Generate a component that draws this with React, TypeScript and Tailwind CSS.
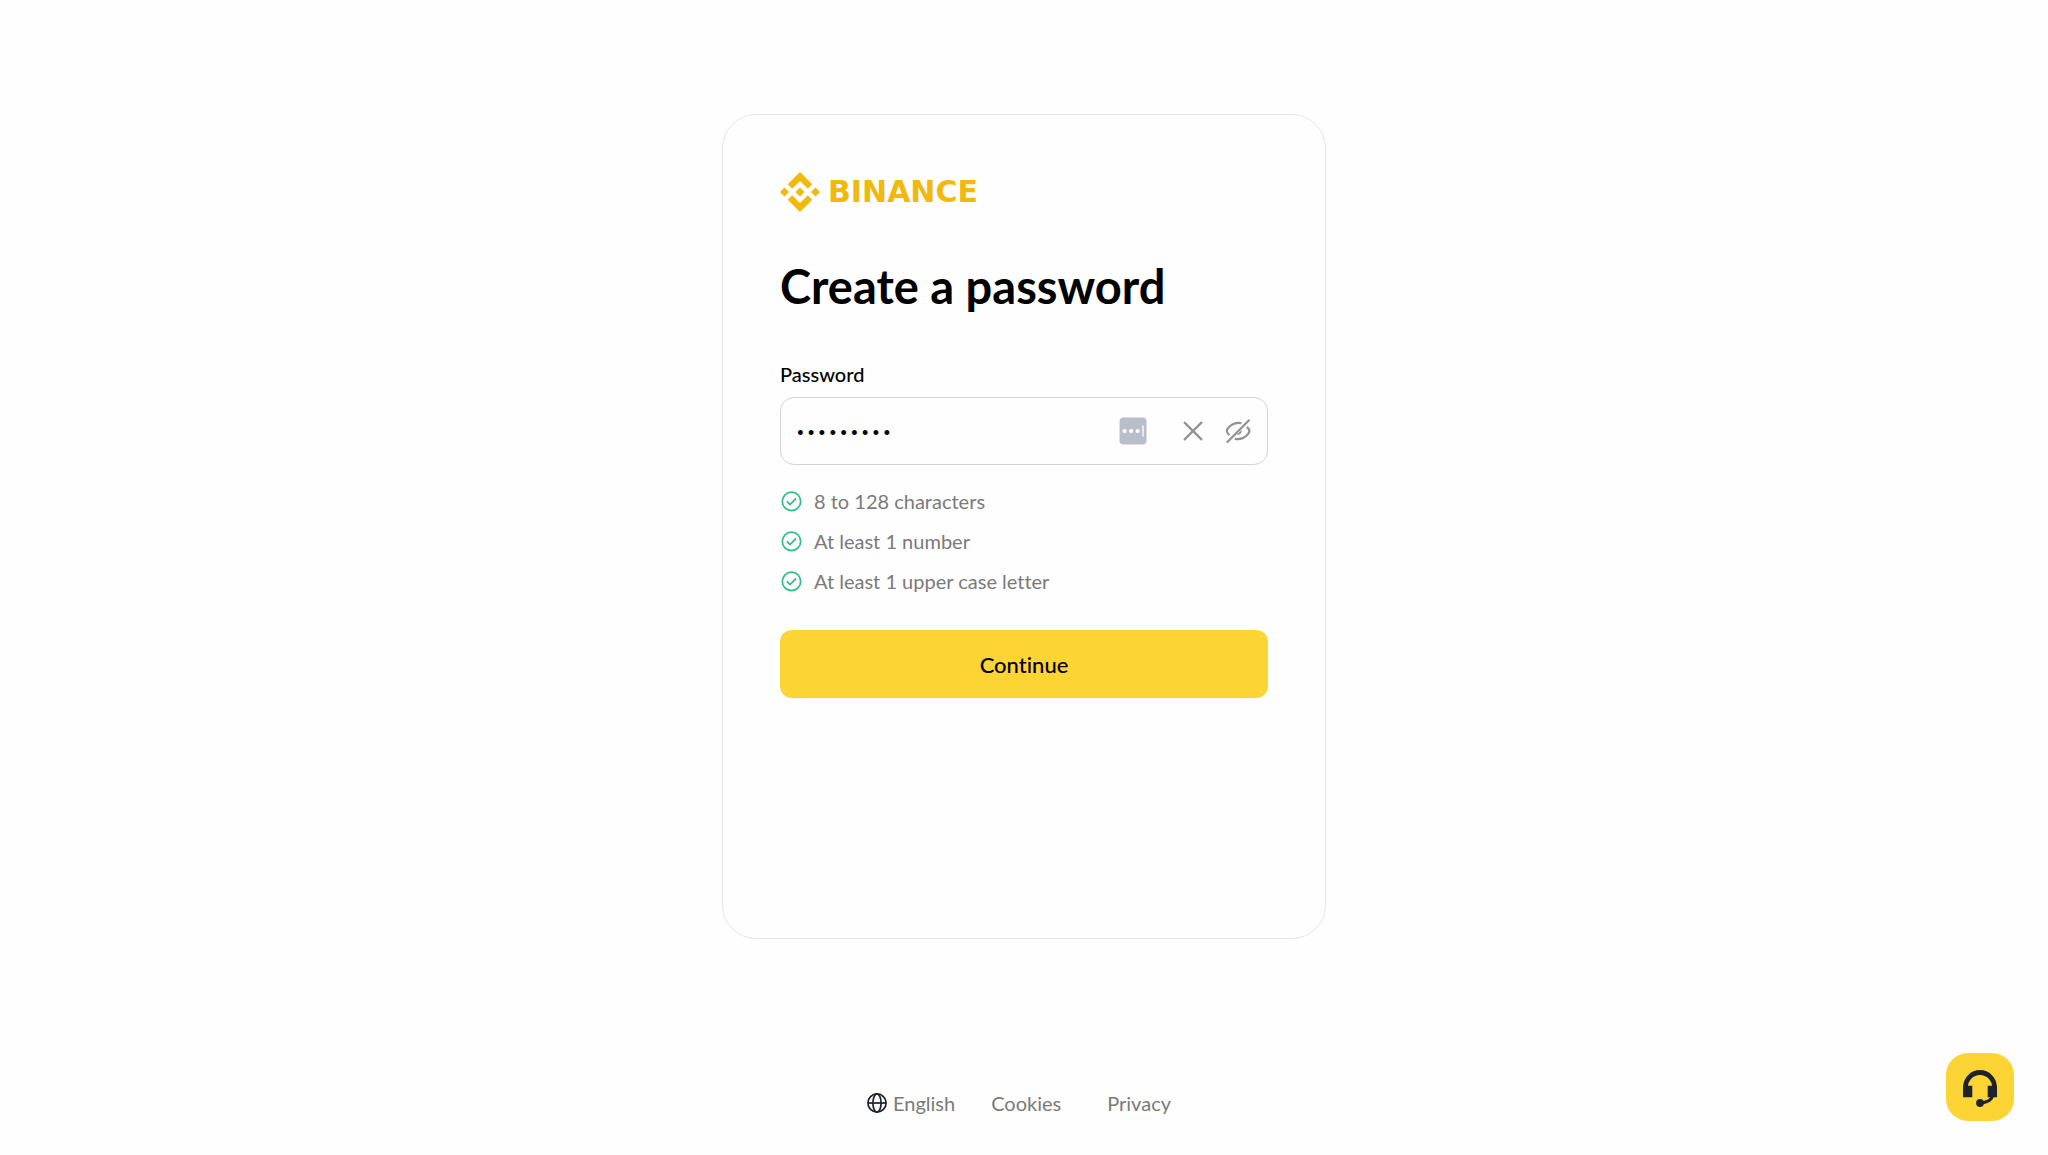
import React, { useState } from 'react';

const rules = ['8 to 128 characters', 'At least 1 number', 'At least 1 upper case letter'];

const BinanceMark = () => (
  <svg viewBox="0 0 126.61 126.61" className="w-10 h-10 shrink-0" fill="#F0B90B" aria-hidden="true">
    <path d="M38.73 53.2l24.59-24.58 24.6 24.6 14.3-14.31L63.32 0l-38.9 38.9z" />
    <path d="M0 63.31l14.3-14.31 14.31 14.31-14.31 14.3z" />
    <path d="M38.73 73.41l24.59 24.59 24.6-24.6 14.31 14.29-38.91 38.92-38.9-38.89z" />
    <path d="M98 63.31l14.3-14.31 14.31 14.3-14.31 14.32z" />
    <path d="M77.83 63.3L63.32 48.78 48.79 63.31l14.53 14.5z" />
  </svg>
);

const CheckIcon = () => (
  <svg viewBox="0 0 22 22" className="w-[22px] h-[22px] shrink-0" fill="none" stroke="#2EBD85" aria-hidden="true">
    <circle cx="11.5" cy="11.4" r="9.2" strokeWidth="1.7" />
    <path d="M6.8 11.3l3.3 3.3 6-6.2" strokeWidth="1.7" />
  </svg>
);

const ManagerIcon = () => (
  <svg viewBox="0 0 28 28" className="w-7 h-7" aria-hidden="true">
    <rect x="0.5" y="0.5" width="27" height="27" rx="4" fill="#B9BECB" />
    <g fill="#fff">
      <circle cx="5.6" cy="14" r="2.1" />
      <circle cx="12.1" cy="14" r="2.1" />
      <circle cx="18.6" cy="14" r="2.1" />
      <rect x="23.4" y="8.6" width="1.3" height="10.8" rx="0.5" />
    </g>
  </svg>
);

const CloseIcon = () => (
  <svg viewBox="0 0 24 24" className="w-6 h-6" fill="none" stroke="#929292" strokeWidth="2.2" strokeLinecap="round" aria-hidden="true">
    <path d="M3.6 3.6l16.8 16.8M20.4 3.6L3.6 20.4" />
  </svg>
);

const EyeOffIcon = () => (
  <svg viewBox="0 0 26 26" className="w-[26px] h-[26px]" fill="none" stroke="#929292" strokeWidth="2.2" aria-hidden="true">
    <path d="M4.4 17.2C2.6 15.6 1.8 14.2 1.8 13c0-2.3 5-8.2 11.5-8.2 1.1 0 2.2.2 3.2.5" />
    <path d="M21.8 8.9c1.7 1.5 2.6 3 2.6 4.1 0 2.3-5 8.2-11.5 8.2-1.1 0-2.1-.2-3.1-.5" />
    <path d="M2.4 24L23.8 2.4" strokeLinecap="round" />
    <path d="M11.8 16.8c3 .5 5.4-1.9 4.9-4.9z" fill="#929292" stroke="none" />
  </svg>
);

const GlobeIcon = () => (
  <svg viewBox="0 0 20 20" className="w-5 h-5 shrink-0" fill="none" stroke="#1E2329" strokeWidth="1.7" aria-hidden="true">
    <circle cx="10" cy="10" r="9.1" />
    <ellipse cx="10" cy="10" rx="4.1" ry="9.1" />
    <path d="M1 10h18" />
  </svg>
);

const HeadsetIcon = () => (
  <svg viewBox="0 -3 34 40" className="w-[34px] h-10" fill="none" aria-hidden="true">
    <path d="M2.5 18v-.7a14.5 14.8 0 0 1 29 0v.7" stroke="#1E2329" strokeWidth="4.8" />
    <path d="M0 15.8h9.3v11.4H0zM24.7 15.8H34v11.4h-9.3z" fill="#1E2329" />
    <path d="M29.3 26.5c-1.2 3.8-4.8 6-12.3 6.5" stroke="#1E2329" strokeWidth="3.2" />
    <circle cx="17" cy="33" r="3.9" fill="#1E2329" />
  </svg>
);

const App = () => {
  const [password, setPassword] = useState('Password1');
  const [visible, setVisible] = useState(false);

  return (
    <div className="min-h-screen flex flex-col items-center bg-[#fefefe] pt-[114px] pb-9 font-['Lato',sans-serif] [font-variant-ligatures:none] text-black">
      <main className="w-full max-w-[604px] min-h-[825px] rounded-[34px] border border-[#e6e6e6] px-[57px] pt-[57px]">
        <div className="flex items-center gap-2">
          <BinanceMark />
          <span className="font-['DejaVu_Sans',sans-serif] font-bold text-[30px] leading-10 text-[#F0B90B]">BINANCE</span>
        </div>

        <h1 className="mt-12 text-[47px] leading-[52px] font-bold">Create a password</h1>

        <form className="mt-[50px]" onSubmit={(e) => e.preventDefault()}>
          <label htmlFor="password" className="block text-xl leading-6 font-medium">Password</label>
          <div className="mt-[11px] flex items-center h-[68px] rounded-[14px] border border-[#d4d4d4] pl-3.5 pr-4">
            <input
              id="password"
              type={visible ? 'text' : 'password'}
              value={password}
              onChange={(e) => setPassword(e.target.value)}
              className="flex-1 min-w-0 pt-1.5 bg-transparent font-['Liberation_Mono',monospace] text-lg outline-none"
            />
            <button type="button" aria-label="Password manager">
              <ManagerIcon />
            </button>
            <button type="button" aria-label="Clear" className="ml-[34px]" onClick={() => setPassword('')}>
              <CloseIcon />
            </button>
            <button type="button" aria-label="Show password" className="ml-5" onClick={() => setVisible(!visible)}>
              <EyeOffIcon />
            </button>
          </div>

          <ul className="mt-6 flex flex-col gap-4">
            {rules.map((rule) => (
              <li key={rule} className="flex items-center gap-3 text-xl leading-6 text-[#7a7a7a]">
                <CheckIcon />
                {rule}
              </li>
            ))}
          </ul>

          <button type="submit" className="mt-[37px] w-full h-[68px] rounded-xl bg-[#FCD535] text-[22px] font-medium">
            Continue
          </button>
        </form>
      </main>

      <footer className="mt-auto flex items-center text-xl leading-8 text-[#7a7a7a]">
        <button type="button" className="flex items-center gap-1.5">
          <GlobeIcon />
          English
        </button>
        <a href="#cookies" className="ml-9">Cookies</a>
        <a href="#privacy" className="ml-[46px] mr-2.5">Privacy</a>
      </footer>

      <button
        type="button"
        aria-label="Support"
        className="fixed right-[34px] bottom-[34px] w-[68px] h-[68px] rounded-[22px] bg-[#FCD535] flex items-center justify-center"
      >
        <HeadsetIcon />
      </button>
    </div>
  );
};

export default App;
